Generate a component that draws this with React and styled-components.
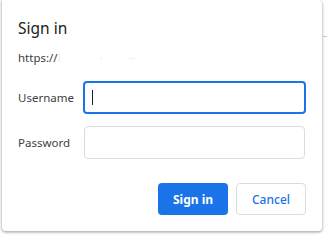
import React from 'react'
import styled, { createGlobalStyle } from 'styled-components'

const GlobalStyle = createGlobalStyle`
  html, body {
    margin: 0;
    padding: 0;
    background: #ffffff;
    font-family: "Noto Sans", "Open Sans", Arial, sans-serif;
  }
`;

const Page = styled.div`
  width: 327px;
  height: 235px;
  overflow: hidden;
  position: relative;
  padding: 0 0 0 2px;
  box-sizing: border-box;
`;

const Backdrop = styled.div`
  position: absolute;
  left: 323px;
  top: 36px;
  width: 4px;
  height: 1px;
  background: #c8c8c8;
`;

const Dialog = styled.div`
  width: 320px;
  height: 231px;
  box-sizing: border-box;
  background: #fff;
  border-radius: 0 4px 4px 4px;
  box-shadow: 0 1px 3px rgba(60, 64, 67, 0.35), 0 1px 2px 1px rgba(60, 64, 67, 0.15);
  padding: 17px 16px 16px 16px;
  display: flex;
  flex-direction: column;
`;

const Title = styled.h1`
  margin: 0;
  font-size: 15.5px;
  font-weight: 400;
  color: #202124;
  line-height: 22px;
`;

const Origin = styled.div`
  margin-top: 11px;
  font-size: 11.5px;
  color: #3c4043;
  line-height: 16px;
  span {
    color: #e8e8f0;
  }
`;

const Form = styled.div`
  margin-top: 15px;
  display: grid;
  grid-template-columns: 65px 1fr;
  row-gap: 12px;
  align-items: center;
`;

const Label = styled.label`
  font-size: 11.5px;
  color: #3c4043;
`;

const Field = styled.div`
  height: 33px;
  box-sizing: border-box;
  border-radius: 4px;
  border: ${p => (p.focused ? '2px solid #1a73e8' : '1px solid #dadce0')};
  margin: ${p => (p.focused ? '0' : '0 1px')};
  display: flex;
  align-items: center;
  padding-left: 7px;
`;

const Caret = styled.div`
  width: 1px;
  height: 15px;
  background: #202124;
`;

const Actions = styled.div`
  margin-top: auto;
  display: flex;
  justify-content: flex-end;
  gap: 8px;
`;

const Button = styled.button`
  height: 32px;
  width: 70px;
  box-sizing: border-box;
  border-radius: 4px;
  font-family: inherit;
  font-size: 12px;
  font-weight: ${p => (p.primary ? 700 : 500)};
  padding: 0;
  background: ${p => (p.primary ? '#1a73e8' : '#fff')};
  color: ${p => (p.primary ? '#fff' : '#1a73e8')};
  border: ${p => (p.primary ? 'none' : '1px solid #dadce0')};
`;

export default function App() {
  return (
    <Page>
      <GlobalStyle />
      <Backdrop />
      <Dialog>
        <Title>Sign in</Title>
        <Origin>https://<span>l &nbsp; &nbsp; &nbsp; &nbsp; &nbsp; &nbsp; · &nbsp; &nbsp; &nbsp; &nbsp; ·· </span></Origin>
        <Form>
          <Label>Username</Label>
          <Field focused><Caret /></Field>
          <Label>Password</Label>
          <Field />
        </Form>
        <Actions>
          <Button primary>Sign in</Button>
          <Button>Cancel</Button>
        </Actions>
      </Dialog>
    </Page>
  )
}
